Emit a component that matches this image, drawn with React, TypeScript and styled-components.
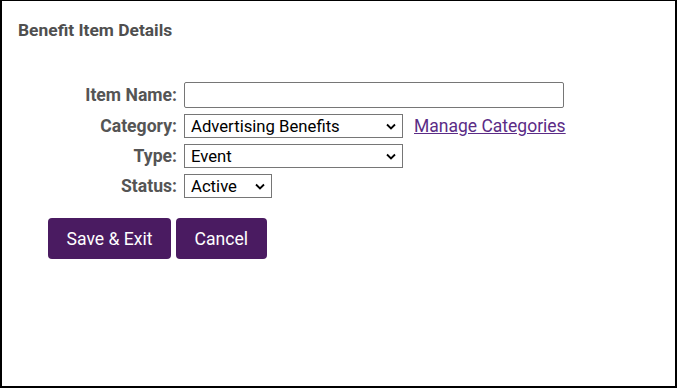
import React from 'react';
import styled, { createGlobalStyle } from 'styled-components';

const GlobalStyle = createGlobalStyle`
  html, body {
    margin: 0;
    padding: 0;
    background: #fff;
  }
  body {
    font-family: Roboto, "Liberation Sans", Arial, sans-serif;
  }
`;

// chevron used by the native-looking selects
const chevron =
  "data:image/svg+xml;utf8," +
  encodeURIComponent(
    '<svg xmlns="http://www.w3.org/2000/svg" width="10" height="7" viewBox="0 0 10 7"><path d="M1 1.5l4 4 4-4" fill="none" stroke="#000" stroke-width="1.8"/></svg>'
  );

const BenefitItemDetails = () => {
  return (
    <>
      <GlobalStyle />
      <Frame>
        <Title>Benefit Item Details</Title>
        <FormGrid>
          <Label htmlFor="itemName">Item Name:</Label>
          <Field>
            <TextInput id="itemName" type="text" />
          </Field>

          <Label htmlFor="category">Category:</Label>
          <Field>
            <Select id="category" $width={219} defaultValue="adv">
              <option value="adv">Advertising Benefits</option>
            </Select>
            <ManageLink href="#">Manage Categories</ManageLink>
          </Field>

          <Label htmlFor="type">Type:</Label>
          <Field>
            <Select id="type" $width={219} defaultValue="event">
              <option value="event">Event</option>
            </Select>
          </Field>

          <Label htmlFor="status">Status:</Label>
          <Field>
            <Select id="status" $width={88} defaultValue="active">
              <option value="active">Active</option>
              <option value="inactive">Inactive</option>
            </Select>
          </Field>
        </FormGrid>
        <Buttons>
          <Button type="button">Save &amp; Exit</Button>
          <Button type="button">Cancel</Button>
        </Buttons>
      </Frame>
    </>
  );
};

export default BenefitItemDetails;

const Frame = styled.div`
  box-sizing: border-box;
  width: 677px;
  height: 388px;
  border: 2px solid #000;
  border-top-width: 1px;
  padding: 19px 16px 0;
`;

const Title = styled.h2`
  margin: 0;
  font-size: 17.4px;
  font-weight: 700;
  line-height: 20px;
  color: #4f4f4f;
`;

const FormGrid = styled.div`
  display: grid;
  grid-template-columns: 159px auto;
  column-gap: 7px;
  row-gap: 6px;
  align-items: center;
  margin-top: 42px;
`;

const Label = styled.label`
  text-align: right;
  font-size: 17.6px;
  font-weight: 700;
  color: #555;
`;

const Field = styled.div`
  display: flex;
  align-items: center;
  gap: 11px;
`;

const TextInput = styled.input`
  box-sizing: border-box;
  width: 380px;
  height: 26px;
  margin: 0;
  border: 1px solid #767676;
  border-radius: 2px;
  padding: 1px 4px;
  font-family: Roboto, "Liberation Sans", Arial, sans-serif;
  font-size: 16.7px;
`;

const Select = styled.select<{ $width: number }>`
  box-sizing: border-box;
  appearance: none;
  width: ${(p) => p.$width}px;
  height: 24px;
  margin: 0;
  padding: 0 20px 0 6px;
  font-family: Roboto, "Liberation Sans", Arial, sans-serif;
  font-size: 16.7px;
  color: #000;
  background: #fff url("${chevron}") no-repeat right 6px center;
  border: 1px solid #767676;
  border-radius: 0;
`;

const ManageLink = styled.a`
  font-size: 17.5px;
  color: #5b2c86;
  text-decoration: underline;
`;

const Buttons = styled.div`
  display: flex;
  gap: 5px;
  margin-top: 20px;
  padding-left: 30px;
`;

const Button = styled.button`
  box-sizing: border-box;
  height: 41px;
  padding: 0 18.5px;
  border: none;
  border-radius: 4px;
  background: #4a1b61;
  color: #fff;
  font-family: Roboto, "Liberation Sans", Arial, sans-serif;
  font-size: 17.6px;
  cursor: pointer;
`;
